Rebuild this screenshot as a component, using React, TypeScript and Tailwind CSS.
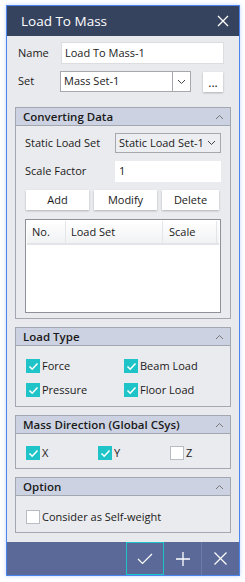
const font = { fontFamily: '"Open Sans", "Noto Sans", sans-serif' };

function Check({ on }: { on: boolean }) {
  return on ? (
    <span className="flex h-[14px] w-[14px] shrink-0 items-center justify-center bg-[#1fc4c8]">
      <svg width="11" height="9" viewBox="0 0 11 9" fill="none">
        <path d="M1.5 4.5 L4.2 7.2 L9.5 1.5" stroke="white" strokeWidth="1.6" />
      </svg>
    </span>
  ) : (
    <span className="h-[14px] w-[14px] shrink-0 border border-[#b9bcc2] bg-white" />
  );
}

function Caret() {
  return (
    <svg width="9" height="6" viewBox="0 0 9 6" fill="none">
      <path d="M1 1 L4.5 4.5 L8 1" stroke="#444" strokeWidth="1" />
    </svg>
  );
}

function Group({ title, children }: { title: string; children: React.ReactNode }) {
  return (
    <section className="mx-[8px] border border-[#a3a7b0] bg-[#eaebee]">
      <div className="flex h-[18px] items-center justify-between border-b border-[#a3a7b0] bg-[#cdd2e2] pl-[7px] pr-[6px]">
        <span className="text-[11.5px] font-semibold text-[#1a1a1a]">{title}</span>
        <svg width="9" height="6" viewBox="0 0 9 6" fill="none">
          <path d="M1 5 L4.5 1.5 L8 5" stroke="#777" strokeWidth="1" />
        </svg>
      </div>
      {children}
    </section>
  );
}

export default function App() {
  return (
    <div className="h-[582px] w-[245px] bg-white pl-[6px] pt-[5px]" style={font}>
      <div className="flex h-[571px] w-[234px] flex-col border border-[#4a86ee] bg-[#e9eaed] shadow-[0_0_4px_rgba(80,130,240,0.35)]">
        <header className="flex h-[30px] shrink-0 items-center justify-between bg-[#36435f] pl-[14px] pr-[10px]">
          <span className="text-[13.5px] text-white">Load To Mass</span>
          <svg width="12" height="12" viewBox="0 0 12 12">
            <path d="M1 1 L11 11 M11 1 L1 11" stroke="white" strokeWidth="1.3" />
          </svg>
        </header>

        <main className="flex flex-1 flex-col whitespace-nowrap text-[11px] text-[#1a1a1a]">
          <div className="mt-[6px] flex items-center pl-[11px]">
            <span className="w-[43px]">Name</span>
            <div className="flex h-[22px] w-[163px] items-center border border-[#dcdde0] bg-white pl-[3px]">
              Load To Mass-1
            </div>
          </div>
          <div className="mt-[7px] flex items-center pl-[11px]">
            <span className="w-[42px]">Set</span>
            <div className="flex h-[21px] w-[131px] items-center border border-[#a6a8ad] bg-white">
              <span className="flex-1 pl-[3px]">Mass Set-1</span>
              <span className="flex h-full w-[18px] items-center justify-center border-l border-[#a6a8ad]">
                <Caret />
              </span>
            </div>
            <button className="ml-[12px] flex h-[20px] w-[20px] items-end justify-center bg-white pb-[3px] text-[12px] leading-none shadow-[0_1px_2px_rgba(0,0,0,0.25)]">
              ...
            </button>
          </div>

          <div className="mt-[15px]">
            <Group title="Converting Data">
              <div className="px-[9px] pb-[5px] pt-[7px]">
                <div className="flex items-center">
                  <span className="w-[90px]">Static Load Set</span>
                  <div className="flex h-[20px] w-[106px] items-center border border-[#a6a8ad] bg-[#eceef1] pl-[3px]">
                    <span className="flex-1">Static Load Set-1</span>
                    <span className="pr-[4px]">
                      <Caret />
                    </span>
                  </div>
                </div>
                <div className="mt-[8px] flex items-center">
                  <span className="w-[90px]">Scale Factor</span>
                  <div className="flex h-[21px] w-[106px] items-center bg-white pl-[4px]">1</div>
                </div>
                <div className="mt-[8px] flex gap-[5px] pl-[1px]">
                  <button className="h-[20px] w-[63px] bg-white shadow-[0_1px_2px_rgba(0,0,0,0.25)]">Add</button>
                  <button className="h-[20px] w-[63px] bg-white shadow-[0_1px_2px_rgba(0,0,0,0.25)]">Modify</button>
                  <button className="h-[20px] w-[57px] bg-white shadow-[0_1px_2px_rgba(0,0,0,0.25)]">Delete</button>
                </div>
                <div className="mt-[9px] h-[94px] w-[196px] border border-[#8e9198] bg-white p-[1px]">
                  <div className="flex h-[24px] border-b-2 border-[#e3e4e8] bg-gradient-to-b from-white to-[#f1f2f4]">
                    <span className="flex w-[39px] items-center border-r border-[#e4e5e8] pl-[5px]">No.</span>
                    <span className="flex w-[97px] items-center border-r border-[#e4e5e8] pl-[5px]">Load Set</span>
                    <span className="flex w-[54px] items-center border-r border-[#e4e5e8] pl-[6px]">Scale</span>
                  </div>
                </div>
              </div>
            </Group>
          </div>

          <div className="mt-[8px]">
            <Group title="Load Type">
              <div className="grid grid-cols-[98px_1fr] pb-[4px] pl-[10px] pt-[8px]">
                <label className="flex h-[24px] items-center gap-[2px]"><Check on />Force</label>
                <label className="flex h-[24px] items-center gap-[2px]"><Check on />Beam Load</label>
                <label className="flex h-[24px] items-center gap-[2px]"><Check on />Pressure</label>
                <label className="flex h-[24px] items-center gap-[2px]"><Check on />Floor Load</label>
              </div>
            </Group>
          </div>

          <div className="mt-[8px]">
            <Group title="Mass Direction (Global CSys)">
              <div className="flex pb-[3px] pl-[10px] pt-[7px]">
                <label className="flex h-[24px] w-[72px] items-center gap-[2px]"><Check on />X</label>
                <label className="flex h-[24px] w-[72px] items-center gap-[2px]"><Check on />Y</label>
                <label className="flex h-[24px] items-center gap-[2px]"><Check on={false} />Z</label>
              </div>
            </Group>
          </div>

          <div className="mt-[8px]">
            <Group title="Option">
              <div className="flex pb-[3px] pl-[10px] pt-[9px]">
                <label className="flex h-[24px] items-center gap-[2px]"><Check on={false} />Consider as Self-weight</label>
              </div>
            </Group>
          </div>
        </main>

        <footer className="flex h-[33px] shrink-0 justify-end bg-[#5a6998]">
          <button className="flex w-[38px] items-center justify-center border border-[#1cc4c8]">
            <svg width="16" height="12" viewBox="0 0 16 12" fill="none">
              <path d="M1 6 L5.5 10.5 L15 1" stroke="white" strokeWidth="1.2" />
            </svg>
          </button>
          <button className="flex w-[38px] items-center justify-center border-r border-[#6d7ba6]">
            <svg width="14" height="14" viewBox="0 0 14 14" fill="none">
              <path d="M7 0 V14 M0 7 H14" stroke="white" strokeWidth="1.3" />
            </svg>
          </button>
          <button className="flex w-[37px] items-center justify-center">
            <svg width="13" height="13" viewBox="0 0 13 13" fill="none">
              <path d="M0.5 0.5 L12.5 12.5 M12.5 0.5 L0.5 12.5" stroke="white" strokeWidth="1.2" />
            </svg>
          </button>
        </footer>
      </div>
    </div>
  );
}
